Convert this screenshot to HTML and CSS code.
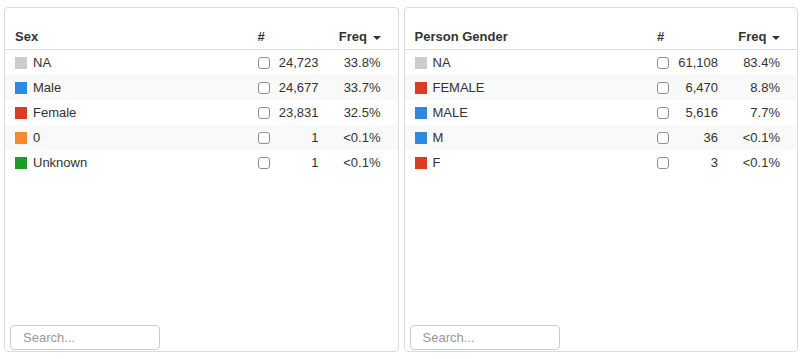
FILE: index.html
```html
<!DOCTYPE html>
<html>
<head>
<meta charset="utf-8">
<link rel="stylesheet" href="styles.css">
</head>
<body>
<div class="wrap">
  <div class="panel">
    <div class="row head">
      <div class="c-label">Sex</div>
      <div class="c-count">#</div>
      <div class="c-freq">Freq <span class="caret"></span></div>
    </div>
    <div class="row"><div class="c-label"><span class="sw sw-gray"></span>NA</div><span class="cb"></span><div class="c-num">24,723</div><div class="c-freq">33.8%</div></div>
    <div class="row alt"><div class="c-label"><span class="sw sw-blue"></span>Male</div><span class="cb"></span><div class="c-num">24,677</div><div class="c-freq">33.7%</div></div>
    <div class="row"><div class="c-label"><span class="sw sw-red"></span>Female</div><span class="cb"></span><div class="c-num">23,831</div><div class="c-freq">32.5%</div></div>
    <div class="row alt"><div class="c-label"><span class="sw sw-orange"></span>0</div><span class="cb"></span><div class="c-num">1</div><div class="c-freq">&lt;0.1%</div></div>
    <div class="row"><div class="c-label"><span class="sw sw-green"></span>Unknown</div><span class="cb"></span><div class="c-num">1</div><div class="c-freq">&lt;0.1%</div></div>
    <div class="spacer"></div>
    <input class="search" type="text" placeholder="Search...">
  </div>
  <div class="panel">
    <div class="row head">
      <div class="c-label">Person Gender</div>
      <div class="c-count">#</div>
      <div class="c-freq">Freq <span class="caret"></span></div>
    </div>
    <div class="row"><div class="c-label"><span class="sw sw-gray"></span>NA</div><span class="cb"></span><div class="c-num">61,108</div><div class="c-freq">83.4%</div></div>
    <div class="row alt"><div class="c-label"><span class="sw sw-red"></span>FEMALE</div><span class="cb"></span><div class="c-num">6,470</div><div class="c-freq">8.8%</div></div>
    <div class="row"><div class="c-label"><span class="sw sw-blue"></span>MALE</div><span class="cb"></span><div class="c-num">5,616</div><div class="c-freq">7.7%</div></div>
    <div class="row alt"><div class="c-label"><span class="sw sw-blue"></span>M</div><span class="cb"></span><div class="c-num">36</div><div class="c-freq">&lt;0.1%</div></div>
    <div class="row"><div class="c-label"><span class="sw sw-red"></span>F</div><span class="cb"></span><div class="c-num">3</div><div class="c-freq">&lt;0.1%</div></div>
    <div class="spacer"></div>
    <input class="search" type="text" placeholder="Search...">
  </div>
</div>
</body>
</html>
```
FILE: styles.css
```css
html, body {
  margin: 0;
  padding: 0;
  background: #fff;
}
body {
  font-family: "Liberation Sans", Arial, Helvetica, sans-serif;
  font-size: 13px;
  color: #333;
}
.wrap {
  display: flex;
  gap: 5px;
  padding: 7px 6px 0 4px;
}
.panel {
  box-sizing: border-box;
  width: 395px;
  height: 345px;
  border: 1px solid #dcdcdc;
  border-radius: 4px;
  display: flex;
  flex-direction: column;
}
.row {
  display: grid;
  grid-template-columns: 1fr 13px 48px 62px;
  align-items: center;
  height: 25px;
  padding: 0 17px 0 10px;
  line-height: 18px;
}
.row.alt {
  background: #f9f9f9;
}
.row.head {
  align-items: end;
  padding-bottom: 3px;
  box-sizing: border-box;
  height: 42px;
  border-bottom: 1px solid #dddddd;
  font-weight: bold;
}
.c-label {
  display: flex;
  align-items: center;
  white-space: nowrap;
}
.c-count {
  grid-column: 2 / 4;
}
.c-num {
  text-align: right;
}
.c-freq {
  text-align: right;
  white-space: nowrap;
}
.caret {
  display: inline-block;
  width: 0;
  height: 0;
  margin-left: 2px;
  vertical-align: middle;
  border-top: 4px solid #333;
  border-left: 4px solid transparent;
  border-right: 4px solid transparent;
}
.sw {
  display: inline-block;
  width: 12px;
  height: 12px;
  margin-right: 6px;
}
.sw-gray { background: #cccccc; }
.sw-blue { background: #2f89de; }
.sw-red { background: #dc3a24; }
.sw-orange { background: #f58a2a; }
.sw-green { background: #1f9a2b; }
.cb {
  box-sizing: border-box;
  width: 12px;
  height: 12px;
  border: 1px solid #8f8f8f;
  border-radius: 3px;
  background: #fff;
}
.spacer {
  flex: 1;
}
.search {
  box-sizing: border-box;
  width: 150px;
  height: 25px;
  margin: 0 0 1px 5px;
  padding: 0 12px;
  border: 1px solid #cccccc;
  border-radius: 4px;
  font-family: "Liberation Sans", Arial, Helvetica, sans-serif;
  font-size: 13px;
  color: #333;
  outline: none;
}
.search::placeholder {
  color: #999;
}
```
